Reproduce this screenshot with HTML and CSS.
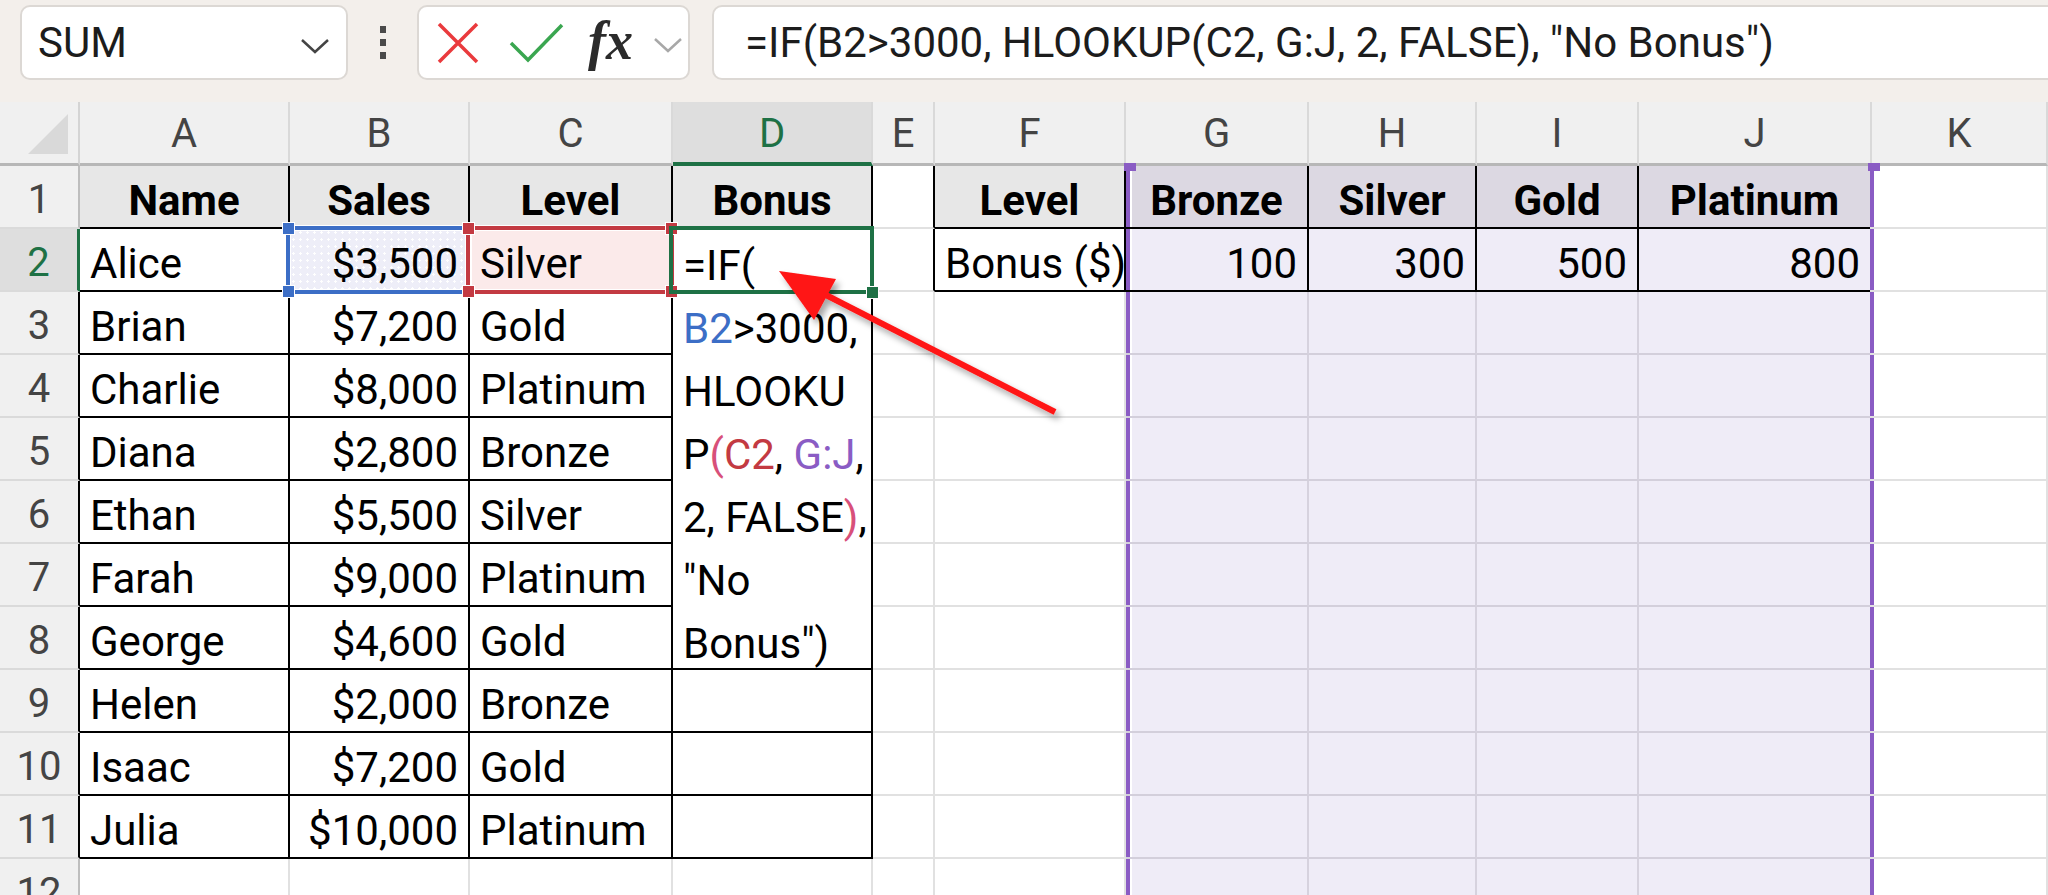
FILE: index.html
```html
<!DOCTYPE html>
<html lang="en">
<head>
    <meta charset="UTF-8">
    <title>Sheet - HLOOKUP bonus</title>
    <link rel="stylesheet" href="styles.css">
</head>
<body>
    <div class="toolbar">
        <div class="namebox">
            <span class="name">SUM</span>
            <svg class="chev" width="30" height="16" viewBox="0 0 30 16"><polyline points="2,2 15,14 28,2" fill="none" stroke="#444" stroke-width="2.5"/></svg>
        </div>
        <div class="grip"><i></i><i></i><i></i></div>
        <div class="fx-buttons">
            <svg class="btn-x" width="42" height="42" viewBox="0 0 42 42"><path d="M2 2 L40 40 M40 2 L2 40" stroke="#ea3a3d" stroke-width="3.5" fill="none"/></svg>
            <svg class="btn-ok" width="55" height="40" viewBox="0 0 55 40"><polyline points="2,20 19,37 53,2" stroke="#3aa650" stroke-width="3.5" fill="none"/></svg>
            <span class="fx">fx</span>
            <svg class="btn-more" width="30" height="16" viewBox="0 0 30 16"><polyline points="2,2 15,14 28,2" fill="none" stroke="#a8a8a8" stroke-width="2.5"/></svg>
        </div>
        <div class="formula">=IF(B2&gt;3000, HLOOKUP(C2, G:J, 2, FALSE), "No Bonus")</div>
    </div>

    <div class="sheet">
        <!-- column headers -->
        <div class="corner"></div>
        <div class="colhead">A</div>
        <div class="colhead">B</div>
        <div class="colhead">C</div>
        <div class="colhead active">D</div>
        <div class="colhead">E</div>
        <div class="colhead">F</div>
        <div class="colhead">G</div>
        <div class="colhead">H</div>
        <div class="colhead">I</div>
        <div class="colhead">J</div>
        <div class="colhead">K</div>

        <!-- row 1 -->
        <div class="rowhead">1</div>
        <div class="c t th">Name</div>
        <div class="c t th">Sales</div>
        <div class="c t th">Level</div>
        <div class="c t th">Bonus</div>
        <div class="c edge"></div>
        <div class="c t th">Level</div>
        <div class="c t th rh gl"><span class="handle"></span>Bronze</div>
        <div class="c t th rh">Silver</div>
        <div class="c t th rh">Gold</div>
        <div class="c t th rh">Platinum</div>
        <div class="c kl"><span class="handle"></span></div>

        <!-- row 2 -->
        <div class="rowhead active">2</div>
        <div class="c t">Alice</div>
        <div class="c t num ref-b">$3,500<span class="box blue"><i class="h tl"></i><i class="h tr"></i><i class="h bl"></i><i class="h br"></i></span></div>
        <div class="c t ref-r">Silver<span class="box red"><i class="h tl"></i><i class="h tr"></i><i class="h bl"></i><i class="h br"></i></span></div>
        <div class="c t editor">
            <span class="cursor-box"><i class="fill"></i></span>
            <div class="line">=IF(</div>
            <div class="line"><span class="r-b">B2</span>&gt;3000,</div>
            <div class="line">HLOOKU</div>
            <div class="line">P<span class="r-p">(</span><span class="r-r">C2</span>, <span class="r-v">G:J</span>,</div>
            <div class="line">2, FALSE<span class="r-p">)</span>,</div>
            <div class="line">"No</div>
            <div class="line">Bonus")</div>
        </div>
        <div class="c edge"></div>
        <div class="c t">Bonus ($)</div>
        <div class="c t num rv gl">100</div>
        <div class="c t num rv">300</div>
        <div class="c t num rv">500</div>
        <div class="c t num rv">800</div>
        <div class="c kl"></div>

        <!-- rows 3-8 : column D is covered by the editor -->
        <div class="rowhead tb">3</div>
        <div class="c t">Brian</div>
        <div class="c t num">$7,200</div>
        <div class="c t">Gold</div>
        <div class="c"></div>
        <div class="c"></div>
        <div class="c rng gl"></div><div class="c rng"></div><div class="c rng"></div><div class="c rng"></div>
        <div class="c kl"></div>

        <div class="rowhead tb">4</div>
        <div class="c t">Charlie</div>
        <div class="c t num">$8,000</div>
        <div class="c t">Platinum</div>
        <div class="c"></div>
        <div class="c"></div>
        <div class="c rng gl"></div><div class="c rng"></div><div class="c rng"></div><div class="c rng"></div>
        <div class="c kl"></div>

        <div class="rowhead tb">5</div>
        <div class="c t">Diana</div>
        <div class="c t num">$2,800</div>
        <div class="c t">Bronze</div>
        <div class="c"></div>
        <div class="c"></div>
        <div class="c rng gl"></div><div class="c rng"></div><div class="c rng"></div><div class="c rng"></div>
        <div class="c kl"></div>

        <div class="rowhead tb">6</div>
        <div class="c t">Ethan</div>
        <div class="c t num">$5,500</div>
        <div class="c t">Silver</div>
        <div class="c"></div>
        <div class="c"></div>
        <div class="c rng gl"></div><div class="c rng"></div><div class="c rng"></div><div class="c rng"></div>
        <div class="c kl"></div>

        <div class="rowhead tb">7</div>
        <div class="c t">Farah</div>
        <div class="c t num">$9,000</div>
        <div class="c t">Platinum</div>
        <div class="c"></div>
        <div class="c"></div>
        <div class="c rng gl"></div><div class="c rng"></div><div class="c rng"></div><div class="c rng"></div>
        <div class="c kl"></div>

        <div class="rowhead tb">8</div>
        <div class="c t">George</div>
        <div class="c t num">$4,600</div>
        <div class="c t">Gold</div>
        <div class="c"></div>
        <div class="c"></div>
        <div class="c rng gl"></div><div class="c rng"></div><div class="c rng"></div><div class="c rng"></div>
        <div class="c kl"></div>

        <!-- rows 9-11 -->
        <div class="rowhead tb">9</div>
        <div class="c t">Helen</div>
        <div class="c t num">$2,000</div>
        <div class="c t">Bronze</div>
        <div class="c t"></div>
        <div class="c"></div>
        <div class="c"></div>
        <div class="c rng gl"></div><div class="c rng"></div><div class="c rng"></div><div class="c rng"></div>
        <div class="c kl"></div>

        <div class="rowhead tb">10</div>
        <div class="c t">Isaac</div>
        <div class="c t num">$7,200</div>
        <div class="c t">Gold</div>
        <div class="c t"></div>
        <div class="c"></div>
        <div class="c"></div>
        <div class="c rng gl"></div><div class="c rng"></div><div class="c rng"></div><div class="c rng"></div>
        <div class="c kl"></div>

        <div class="rowhead tb">11</div>
        <div class="c t">Julia</div>
        <div class="c t num">$10,000</div>
        <div class="c t">Platinum</div>
        <div class="c t"></div>
        <div class="c"></div>
        <div class="c"></div>
        <div class="c rng gl"></div><div class="c rng"></div><div class="c rng"></div><div class="c rng"></div>
        <div class="c kl"></div>

        <div class="rowhead">12</div>
        <div class="c"></div>
        <div class="c"></div>
        <div class="c"></div>
        <div class="c"></div>
        <div class="c"></div>
        <div class="c"></div>
        <div class="c rng gl"></div><div class="c rng"></div><div class="c rng"></div><div class="c rng"></div>
        <div class="c kl"></div>
    </div>

    <!-- callout arrow drawn over the sheet -->
    <svg class="arrow" width="2048" height="895" viewBox="0 0 2048 895">
        <defs>
            <filter id="shade" x="-20%" y="-20%" width="140%" height="140%">
                <feDropShadow dx="4" dy="5" stdDeviation="3" flood-color="#000" flood-opacity="0.35"/>
            </filter>
        </defs>
        <g filter="url(#shade)">
            <line x1="1055" y1="412" x2="822" y2="293" stroke="#ff1414" stroke-width="6"/>
            <polygon points="779,271 836,279 814,320" fill="#ff1414"/>
        </g>
    </svg>
</body>
</html>
```

FILE: styles.css
```css
* {
    margin: 0;
    padding: 0;
    box-sizing: border-box;
}

html, body {
    width: 2048px;
    height: 895px;
    overflow: hidden;
}

body {
    position: relative;
    background: #f3efeb;
    font-family: Roboto, "Liberation Sans", sans-serif;
    color: #000;
}

/* formula toolbar */
.toolbar {
    display: flex;
    align-items: flex-start;
    height: 102px;
    padding: 5px 0 0 20px;
}

.namebox {
    width: 328px;
    height: 75px;
    background: #fff;
    border: 2px solid #dcd8d4;
    border-radius: 10px;
    display: flex;
    align-items: center;
    justify-content: space-between;
    padding: 0 16px 0 16px;
}

.namebox .name {
    font-size: 42px;
    color: #1c1c1c;
}

.namebox .chev {
    margin-top: 6px;
}

.grip {
    width: 69px;
    height: 75px;
    display: flex;
    flex-direction: column;
    align-items: center;
    justify-content: center;
    gap: 6px;
}

.grip i {
    width: 6px;
    height: 7px;
    background: #4a4a4a;
}

.fx-buttons {
    width: 273px;
    height: 75px;
    background: #fff;
    border: 2px solid #dcd8d4;
    border-radius: 10px;
    display: flex;
    align-items: center;
    padding-left: 18px;
}

.btn-ok {
    margin-left: 30px;
}

.fx {
    font-family: "Liberation Serif", serif;
    font-style: italic;
    font-weight: bold;
    font-size: 54px;
    color: #2b2b2b;
    margin-left: 24px;
    margin-top: -4px;
}

.btn-more {
    margin-left: 20px;
    margin-top: 4px;
}

.formula {
    flex: 1;
    height: 75px;
    margin-left: 22px;
    margin-right: -20px;
    background: #fff;
    border: 2px solid #dcd8d4;
    border-radius: 10px;
    display: flex;
    align-items: center;
    padding-left: 31px;
    font-size: 42px;
    color: #1c1c1c;
    white-space: nowrap;
}

/* sheet grid */
.sheet {
    display: grid;
    grid-template-columns: 80px 210px 180px 203px 200px 62px 191px 183px 168px 162px 233px 1fr;
    grid-template-rows: 64px;
    grid-auto-rows: 63px;
    background: #fff;
    font-size: 42px;
}

.corner {
    position: relative;
    background: #f0f0f0;
    border-right: 2px solid #d4d4d4;
    border-bottom: 3px solid #b7b7b7;
}

.corner::after {
    content: "";
    position: absolute;
    right: 10px;
    bottom: 9px;
    border-left: 40px solid transparent;
    border-bottom: 40px solid #d9d9d9;
}

.colhead {
    background: #f0f0f0;
    border-right: 2px solid #d9d9d9;
    border-bottom: 3px solid #b7b7b7;
    display: flex;
    align-items: center;
    justify-content: center;
    padding-top: 2px;
    font-size: 40px;
    color: #444;
}

.colhead.active {
    background: #dedede;
    color: #1e7145;
    border-bottom: 4px solid #1e7145;
}

.rowhead {
    background: #f0f0f0;
    border-right: 2px solid #bdbdbd;
    border-bottom: 2px solid #dadada;
    display: flex;
    align-items: center;
    justify-content: center;
    padding-top: 6px;
    font-size: 40px;
    color: #444;
}

.rowhead.tb {
    border-right-color: #000;
}

.rowhead.active {
    background: #dedede;
    color: #1e7145;
    border-right: 3px solid #1e7145;
}

.c {
    position: relative;
    background: #fff;
    border-right: 2px solid #e1e1e1;
    border-bottom: 2px solid #e1e1e1;
    display: flex;
    align-items: center;
    padding: 8px 10px 0 10px;
    white-space: nowrap;
}

.c.t {
    border-right-color: #000;
    border-bottom-color: #000;
}

.c.th {
    background: #e7e7e7;
    font-weight: bold;
    justify-content: center;
}

.c.num {
    justify-content: flex-end;
}

.c.edge {
    border-right-color: #000;
}

/* G:J reference range */
.c.rh {
    background: #dcd8e2;
}

.c.rv {
    background: #efecf7;
}

.c.rng {
    background: #efecf7;
    border-right-color: #d6d2de;
    border-bottom-color: #d3cfdb;
}

.c.gl {
    box-shadow: inset 4px 0 0 #8a5cc4, inset 6px 0 0 #fff;
}

.c.kl {
    box-shadow: inset 4px 0 0 #8a5cc4, inset 6px 0 0 #fff;
    margin-left: -2px;
}

.handle {
    position: absolute;
    left: -2px;
    top: -3px;
    width: 12px;
    height: 8px;
    background: #8a5cc4;
    z-index: 2;
}

/* B2 / C2 references */
.c.ref-b {
    background-color: #eeeef8;
    background-image: radial-gradient(#ffffff 1px, transparent 1.4px);
    background-size: 7px 7px;
}

.c.ref-r {
    background: #fbeaea;
}

.box {
    position: absolute;
    top: -3px;
    left: -4px;
    right: -3px;
    bottom: -4px;
    border: 4px solid;
    box-shadow: 0 0 0 1px #fff, inset 0 0 0 1px #fff;
    z-index: 2;
}

.box.blue {
    border-color: #3c6ec6;
}

.box.red {
    border-color: #c33a42;
}

.box .h {
    position: absolute;
    width: 13px;
    height: 13px;
    border: 1px solid #fff;
}

.box.blue .h {
    background: #3c6ec6;
}

.box.red .h {
    background: #c33a42;
}

.h.tl { left: -8px; top: -8px; }
.h.tr { right: -8px; top: -8px; }
.h.bl { left: -8px; bottom: -8px; }
.h.br { right: -8px; bottom: -8px; }

/* in-cell editor on D2, grows over D3:D8 */
.c.editor {
    grid-row: span 7;
    flex-direction: column;
    align-items: flex-start;
    padding: 0 0 0 10px;
}

.editor .line {
    height: 63px;
    line-height: 63px;
    padding-top: 5px;
}

.cursor-box {
    position: absolute;
    top: -3px;
    left: -4px;
    right: -3px;
    height: 68px;
    border: 4px solid #1e7145;
    z-index: 3;
}

.cursor-box .fill {
    position: absolute;
    right: -9px;
    bottom: -9px;
    width: 13px;
    height: 13px;
    background: #1e7145;
    border: 1px solid #fff;
}

.r-b { color: #3c6ec6; }
.r-r { color: #c33a42; }
.r-v { color: #8a5cc4; }
.r-p { color: #d8507a; }

/* callout */
.arrow {
    position: absolute;
    left: 0;
    top: 0;
    pointer-events: none;
    z-index: 5;
}
```
